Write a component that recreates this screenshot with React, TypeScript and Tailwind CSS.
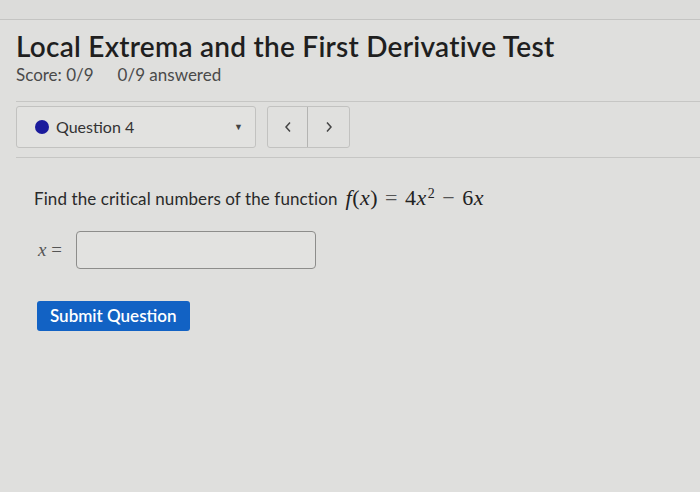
import React from "react";

const App: React.FC = () => {
  return (
    <div className="w-[700px] h-[492px] overflow-hidden bg-[#dfdfdd] font-['Lato','Open_Sans',sans-serif] text-[#222]">
      {/* browser chrome edge */}
      <div className="h-[20px] border-b border-[#c4c4c2] bg-[#dcdcda]" />

      <div className="pl-[16px]">
        <h1 className="mt-[9px] text-[28px] leading-[34px] font-semibold tracking-[0.25px] text-[#1f1f1f]">
          Local Extrema and the First Derivative Test
        </h1>
        <div className="mt-[2px] flex text-[17px] leading-[20px] text-[#4a4a4a]">
          <span>Score: 0/9</span>
          <span className="ml-[24px]">0/9 answered</span>
        </div>

        <div className="mt-[16px] border-t border-[#c6c6c4]">
          <div className="flex items-center gap-[11px] pt-[4px] pb-[9px]">
            <div className="w-[240px] h-[42px] flex items-center pl-[18px] pr-[12px] rounded-[3px] border border-[#c2c2c0] bg-[#e2e2e0]">
              <span className="w-[14px] h-[14px] rounded-full bg-[#1b1b9c]" />
              <span className="ml-[7px] text-[16px] text-[#333]">Question 4</span>
              <span className="ml-auto text-[9px] text-[#444]">▼</span>
            </div>
            <div className="h-[42px] flex rounded-[3px] border border-[#c2c2c0] bg-[#e0e0de]">
              <div className="w-[40px] flex items-center justify-center border-r border-[#b4b4b2]">
                <svg width="8" height="12" viewBox="0 0 8 12">
                  <path d="M6 1.5 L2 6 L6 10.5" fill="none" stroke="#444" strokeWidth="1.5" />
                </svg>
              </div>
              <div className="w-[41px] flex items-center justify-center">
                <svg width="8" height="12" viewBox="0 0 8 12">
                  <path d="M2 1.5 L6 6 L2 10.5" fill="none" stroke="#444" strokeWidth="1.5" />
                </svg>
              </div>
            </div>
          </div>
          <div className="border-t border-[#c6c6c4]" />
        </div>

        <div className="pl-[18px]">
          <p className="mt-[23px] flex items-baseline text-[17px] tracking-[0.1px] text-[#2a2a2a]">
            <span>Find the critical numbers of the function</span>
            <span className="ml-[8px] font-['Liberation_Serif',serif] text-[22px] tracking-[0.5px] text-[#222]">
              <i>f</i>(<i>x</i>)<span className="mx-[7px] text-[#555]">=</span>4<i>x</i>
              <sup className="text-[14px] ml-[1px]">2</sup>
              <span className="mx-[7px] text-[#555]">−</span>6<i>x</i>
            </span>
          </p>

          <div className="mt-[17px] flex items-center">
            <span className="ml-[4px] w-[38px] font-['Liberation_Serif',serif] text-[19px] text-[#555]">
              <i>x</i> =
            </span>
            <div className="w-[240px] h-[38px] rounded-[4px] border border-[#8d8d8b] bg-[#e2e2e0]" />
          </div>

          <button className="mt-[32px] ml-[3px] h-[30px] px-[13px] rounded-[3px] bg-[#1262c4] text-white text-[17px] font-semibold">
            Submit Question
          </button>
        </div>
      </div>
    </div>
  );
};

export default App;
